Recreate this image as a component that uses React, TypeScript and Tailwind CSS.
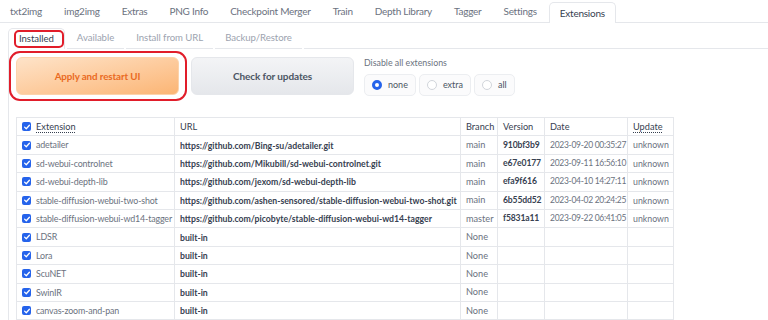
import React from "react";

const topTabs = ["txt2img", "img2img", "Extras", "PNG Info", "Checkpoint Merger", "Train", "Depth Library", "Tagger", "Settings", "Extensions"];
const subTabs = ["Installed", "Available", "Install from URL", "Backup/Restore"];

type Row = { name: string; url: string; branch: string; version?: string; date?: string; update?: string };
const rows: Row[] = [
  { name: "adetailer", url: "https://github.com/Bing-su/adetailer.git", branch: "main", version: "910bf3b9", date: "2023-09-20 00:35:27", update: "unknown" },
  { name: "sd-webui-controlnet", url: "https://github.com/Mikubill/sd-webui-controlnet.git", branch: "main", version: "e67e0177", date: "2023-09-11 16:56:10", update: "unknown" },
  { name: "sd-webui-depth-lib", url: "https://github.com/jexom/sd-webui-depth-lib", branch: "main", version: "efa9f616", date: "2023-04-10 14:27:11", update: "unknown" },
  { name: "stable-diffusion-webui-two-shot", url: "https://github.com/ashen-sensored/stable-diffusion-webui-two-shot.git", branch: "main", version: "6b55dd52", date: "2023-04-02 20:24:25", update: "unknown" },
  { name: "stable-diffusion-webui-wd14-tagger", url: "https://github.com/picobyte/stable-diffusion-webui-wd14-tagger", branch: "master", version: "f5831a11", date: "2023-09-22 06:41:05", update: "unknown" },
  { name: "LDSR", url: "built-in", branch: "None" },
  { name: "Lora", url: "built-in", branch: "None" },
  { name: "ScuNET", url: "built-in", branch: "None" },
  { name: "SwinIR", url: "built-in", branch: "None" },
  { name: "canvas-zoom-and-pan", url: "built-in", branch: "None" },
];

function Check() {
  return (
    <span className="inline-flex w-[9px] h-[9px] rounded-[2px] bg-[#2563eb] items-center justify-center shrink-0">
      <svg viewBox="0 0 10 10" className="w-[8px] h-[8px]">
        <path d="M2 5.2 L4.1 7.2 L8 2.8" fill="none" stroke="white" strokeWidth="1.6" strokeLinecap="round" strokeLinejoin="round" />
      </svg>
    </span>
  );
}

const td = "border border-[#e5e7eb] h-[18.4px] px-[5px] whitespace-nowrap overflow-hidden";

export default function App() {
  return (
    <div className="w-[768px] h-[320px] overflow-hidden bg-white font-[Lato,sans-serif]">
      {/* top tabs */}
      <div className="flex items-end h-[23px] border-b border-[#e5e7eb] gap-[2px]">
        {topTabs.map((t) =>
          t === "Extensions" ? (
            <div key={t} className="px-[10px] h-[21px] -mb-px flex items-center text-[10px] tracking-[-0.25px] text-[#374151] border border-b-0 border-[#e5e7eb] rounded-t-[5px] bg-white">
              {t}
            </div>
          ) : (
            <div key={t} className="px-[10px] h-[21px] flex items-center text-[10px] tracking-[-0.25px] text-[#6b7280]">
              {t}
            </div>
          )
        )}
      </div>

      <div className="ml-[8px]">
        {/* sub tabs */}
        <div className="mt-[5px] flex items-end h-[21px] gap-[2px]">
          {subTabs.map((t, i) =>
            i === 0 ? (
              <div key={t} className="relative px-[10px] h-[21px] flex items-center text-[9.6px] tracking-[-0.05px] text-[#374151] border border-b-0 border-[#e5e7eb] rounded-t-[5px] bg-white">
                {t}
                <span className="absolute left-[5px] right-[0px] top-[1px] bottom-[1px] border-2 border-[#e11d2a] rounded-[5px]" />
              </div>
            ) : (
              <div key={t} className="px-[10px] h-[21px] flex items-center text-[9.6px] tracking-[-0.05px] text-[#9ca3af] border-b border-[#e5e7eb]">
                {t}
              </div>
            )
          )}
          <div className="flex-1 h-[21px] border-b border-[#e5e7eb]" />
        </div>

        {/* panel */}
        <div className="border-l border-[#e5e7eb] pl-[7px] pt-[8px] pb-[10px]">
          <div className="flex items-start">
            <div className="relative">
              <button className="w-[163px] h-[38px] rounded-[6px] bg-gradient-to-br from-[#fee3c8] to-[#fbb574] border border-[#fcd3ab] text-[#ea6a1f] font-bold text-[9.8px] tracking-[-0.1px]">
                Apply and restart UI
              </button>
              <span className="absolute left-[-7px] right-[-8px] top-[-6px] bottom-[-6px] border-2 border-[#e11d2a] rounded-[11px]" />
            </div>
            <button className="ml-[12px] w-[163px] h-[38px] rounded-[6px] bg-gradient-to-b from-[#f3f4f6] to-[#e5e7eb] border border-[#e5e7eb] text-[#4b5563] font-bold text-[10px] tracking-[-0.1px]">
              Check for updates
            </button>
            <div className="ml-[10px] flex flex-col">
              <div className="text-[8.8px] text-[#6b7280] leading-[12px]">Disable all extensions</div>
              <div className="mt-[5px] flex gap-[3px]">
                {["none", "extra", "all"].map((r, i) => (
                  <div key={r} className="h-[22px] px-[7px] flex items-center gap-[6px] border border-[#eceef1] rounded-[5px] bg-[#fbfbfc] text-[9px] text-[#4b5563]">
                    {i === 0 ? (
                      <span className="w-[10px] h-[10px] rounded-full border-[3px] border-[#2563eb] bg-white" />
                    ) : (
                      <span className="w-[10px] h-[10px] rounded-full border border-[#d1d5db] bg-white" />
                    )}
                    {r}
                  </div>
                ))}
              </div>
            </div>
          </div>

          <table className="mt-[21px] table-fixed border-collapse text-[9.2px] w-[657px]">
            <colgroup>
              <col className="w-[158px]" />
              <col className="w-[286px]" />
              <col className="w-[37px]" />
              <col className="w-[47px]" />
              <col className="w-[83px]" />
              <col className="w-[46px]" />
            </colgroup>
            <thead>
              <tr className="text-left">
                <th className={td + " font-normal text-[#374151] pl-[5px] pr-0"}>
                  <div className="flex items-center gap-[5px]">
                    <Check />
                    <span className="underline decoration-dotted underline-offset-2">Extension</span>
                  </div>
                </th>
                <th className={td + " font-normal text-[#374151]"}>URL</th>
                <th className={td + " font-normal text-[#374151]"}>Branch</th>
                <th className={td + " font-normal text-[#374151]"}>Version</th>
                <th className={td + " font-normal text-[#374151]"}>Date</th>
                <th className={td + " font-normal text-[#374151]"}>
                  <span className="underline decoration-dotted underline-offset-2">Update</span>
                </th>
              </tr>
            </thead>
            <tbody>
              {rows.map((r) => (
                <tr key={r.name}>
                  <td className={td + " text-[#6b7280] pl-[5px] pr-0"}>
                    <div className="flex items-center gap-[5px]">
                      <Check />
                      <span className="text-[8.9px] tracking-[-0.15px]">{r.name}</span>
                    </div>
                  </td>
                  <td className={td + " text-[#374151] font-bold text-[8.7px]"}>{r.url}</td>
                  <td className={td + " text-[#6b7280]"}>{r.branch}</td>
                  <td className={td + " text-[#374151] font-bold text-[8.6px] tracking-[-0.15px] px-[4px]"}>{r.version ?? ""}</td>
                  <td className={td + " text-[#6b7280] text-[8.5px] tracking-[-0.3px]"}>{r.date ?? ""}</td>
                  <td className={td + " text-[#6b7280] text-[8.8px] px-[4px]"}>{r.update ?? ""}</td>
                </tr>
              ))}
            </tbody>
          </table>
        </div>
      </div>
    </div>
  );
}
